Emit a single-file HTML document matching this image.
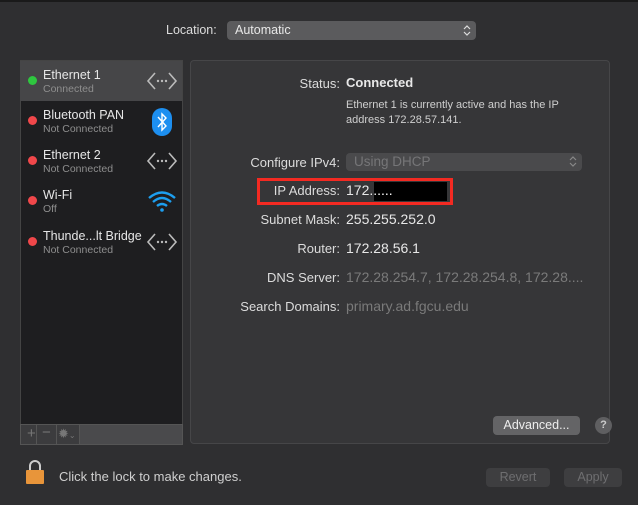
<!DOCTYPE html>
<html><head><style>
*{margin:0;padding:0;box-sizing:border-box}
body{width:638px;height:505px;background:#2f2f31;font-family:"Liberation Sans",sans-serif;color:#dcdcdc;position:relative;overflow:hidden;font-size:12px}
.a{position:absolute}
.top{left:0;top:0;width:638px;height:2px;background:#1a1a1a}
.lbl{text-align:right;width:150px;left:190px;font-size:13px;color:#dcdcdc}
.val{left:346px;font-size:14px;color:#e8e8e8}
.dim{color:#7a7a7a}
.row{left:20px;width:162px;height:40px}
.dot{position:absolute;left:8px;top:15px;width:9px;height:9px;border-radius:50%}
.n{position:absolute;left:23px;top:7px;font-size:12.5px;color:#e6e6e6}
.s{position:absolute;left:23px;top:22px;font-size:10.5px;color:#8e8e8e}
.ic{position:absolute;left:126px;top:8px}
.chev{position:absolute;right:5px;top:3px}
</style></head><body>
<div class="a top"></div>
<div class="a" style="left:166px;top:23px;font-size:12.5px">Location:</div>
<div class="a" style="left:227px;top:21px;width:249px;height:19px;background:#5b5b5d;border-radius:4px;font-size:12.5px;padding:2px 8px;color:#e8e8e8">Automatic<svg class="chev" width="8" height="13"><path d="M1 5 L4 2 L7 5 M1 8 L4 11 L7 8" stroke="#ddd" stroke-width="1.2" fill="none"/></svg></div>

<div class="a" style="left:20px;top:60px;width:163px;height:385px;background:#1e1e20;border:1px solid #444"></div>
<div class="a row" style="top:61px;background:#464648;height:40px"><div class="dot" style="background:#2ec73f"></div><div class="n">Ethernet 1</div><div class="s">Connected</div>
<svg class="ic" width="32" height="24"><path d="M9 4 L2 12 L9 20 M23 4 L30 12 L23 20" stroke="#bbb" stroke-width="1.6" fill="none"/><circle cx="12" cy="12" r="1.2" fill="#bbb"/><circle cx="16" cy="12" r="1.2" fill="#bbb"/><circle cx="20" cy="12" r="1.2" fill="#bbb"/></svg></div>
<div class="a row" style="top:101px"><div class="dot" style="background:#f0474a"></div><div class="n">Bluetooth PAN</div><div class="s">Not Connected</div>
<svg class="ic" width="32" height="30" style="top:6px"><rect x="6" y="1" width="20" height="28" rx="10" fill="#1d8ff0"/><path d="M12 10 L20 19 L16 23 L16 7 L20 11 L12 20" stroke="#fff" stroke-width="1.4" fill="none"/></svg></div>
<div class="a row" style="top:141px"><div class="dot" style="background:#f0474a"></div><div class="n">Ethernet 2</div><div class="s">Not Connected</div>
<svg class="ic" width="32" height="24"><path d="M9 4 L2 12 L9 20 M23 4 L30 12 L23 20" stroke="#bbb" stroke-width="1.6" fill="none"/><circle cx="12" cy="12" r="1.2" fill="#bbb"/><circle cx="16" cy="12" r="1.2" fill="#bbb"/><circle cx="20" cy="12" r="1.2" fill="#bbb"/></svg></div>
<div class="a row" style="top:181px"><div class="dot" style="background:#f0474a"></div><div class="n">Wi-Fi</div><div class="s">Off</div>
<svg class="ic" width="32" height="30" style="top:6px"><path d="M3 11 Q16 0 29 11 M7 15 Q16 7 25 15 M11 19 Q16 15 21 19" stroke="#1d9ff0" stroke-width="2.4" fill="none"/><circle cx="16" cy="23" r="1.8" fill="#1d9ff0"/></svg></div>
<div class="a row" style="top:222px"><div class="dot" style="background:#f0474a"></div><div class="n">Thunde...lt Bridge</div><div class="s">Not Connected</div>
<svg class="ic" width="32" height="24"><path d="M9 4 L2 12 L9 20 M23 4 L30 12 L23 20" stroke="#bbb" stroke-width="1.6" fill="none"/><circle cx="12" cy="12" r="1.2" fill="#bbb"/><circle cx="16" cy="12" r="1.2" fill="#bbb"/><circle cx="20" cy="12" r="1.2" fill="#bbb"/></svg></div>
<div class="a" style="left:20px;top:424px;width:163px;height:21px;background:#4a4a4c;border:1px solid #555"></div>
<div class="a" style="left:21px;top:425px;width:58px;height:19px;background:#3c3c3e"></div>
<div class="a" style="left:27px;top:425px;font-size:15px;color:#777">+</div>
<div class="a" style="left:36px;top:425px;width:1px;height:19px;background:#555"></div>
<div class="a" style="left:42px;top:424px;font-size:15px;color:#777">−</div>
<div class="a" style="left:56px;top:425px;width:1px;height:19px;background:#555"></div>
<div class="a" style="left:58px;top:426px;font-size:13px;color:#777">✹<span style="font-size:8px">⌄</span></div>
<div class="a" style="left:79px;top:425px;width:1px;height:19px;background:#555"></div>

<div class="a" style="left:190px;top:60px;width:420px;height:384px;background:#363638;border:1px solid #464648;border-radius:4px"></div>
<div class="a lbl" style="top:76px">Status:</div>
<div class="a val" style="top:75px;font-weight:bold;font-size:13px">Connected</div>
<div class="a" style="left:346px;top:98px;font-size:11px;line-height:15px;color:#cfcfcf">Ethernet 1 is currently active and has the IP<br>address 172.28.57.141.</div>
<div class="a lbl" style="top:155px">Configure IPv4:</div>
<div class="a" style="left:346px;top:153px;width:236px;height:18px;background:#4a4a4c;border-radius:4px;padding:1px 8px;font-size:13.5px;color:#767678">Using DHCP<svg class="chev" width="8" height="13" style="top:2px"><path d="M1 5 L4 2 L7 5 M1 8 L4 11 L7 8" stroke="#888" stroke-width="1.2" fill="none"/></svg></div>
<div class="a" style="left:257px;top:178px;width:196px;height:27px;border:3px solid #f32a22"></div>
<div class="a" style="left:374px;top:182px;width:73px;height:19px;background:#000"></div>
<div class="a lbl" style="top:183px">IP Address:</div>
<div class="a val" style="top:182px">172.<span style="color:#fff">.....</span></div>
<div class="a lbl" style="top:212px">Subnet Mask:</div>
<div class="a val" style="top:211px">255.255.252.0</div>
<div class="a lbl" style="top:241px">Router:</div>
<div class="a val" style="top:240px">172.28.56.1</div>
<div class="a lbl" style="top:270px">DNS Server:</div>
<div class="a val dim" style="top:269px">172.28.254.7, 172.28.254.8, 172.28....</div>
<div class="a lbl" style="top:299px">Search Domains:</div>
<div class="a val dim" style="top:298px">primary.ad.fgcu.edu</div>
<div class="a" style="left:493px;top:416px;width:87px;height:19px;background:#646466;border-radius:4px;text-align:center;font-size:12.5px;line-height:19px;color:#eee">Advanced...</div>
<div class="a" style="left:595px;top:417px;width:17px;height:17px;border-radius:50%;background:#5f5f61;text-align:center;font-size:11px;line-height:17px;color:#ccc;font-weight:bold">?</div>

<svg class="a" style="left:23px;top:458px" width="24" height="28"><path d="M7 12 V8 A5 5 0 0 1 17 8 V12" stroke="#ccc" stroke-width="2" fill="none"/><rect x="3" y="12" width="18" height="14" rx="1" fill="#e8953a"/></svg>
<div class="a" style="left:59px;top:469px;font-size:13px;color:#cfcfcf">Click the lock to make changes.</div>
<div class="a" style="left:486px;top:468px;width:64px;height:19px;background:#3e3e40;border-radius:4px;text-align:center;font-size:12.5px;line-height:19px;color:#6e6e70">Revert</div>
<div class="a" style="left:564px;top:468px;width:58px;height:19px;background:#3e3e40;border-radius:4px;text-align:center;font-size:12.5px;line-height:19px;color:#6e6e70">Apply</div>
</body></html>
